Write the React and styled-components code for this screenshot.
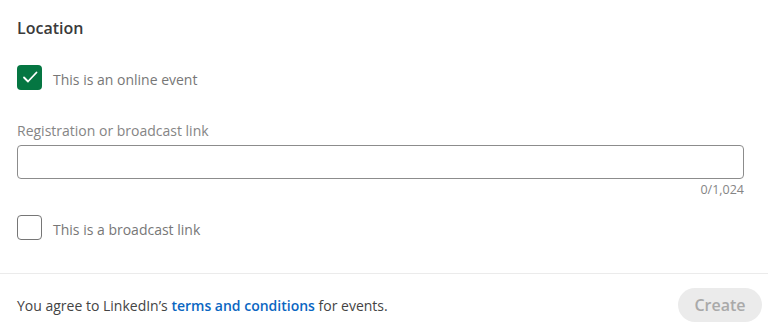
import React, { useState } from "react";
import styled, { createGlobalStyle } from "styled-components";

const Global = createGlobalStyle`
  html, body { margin: 0; padding: 0; background: #fff; }
  body { font-family: "Open Sans", "Noto Sans", sans-serif; }
  * { box-sizing: border-box; }
`;

const Page = styled.div`
  width: 768px;
  height: 330px;
  display: flex;
  flex-direction: column;
  background: #fff;
  overflow: hidden;
`;

const Body = styled.div`
  padding: 16px 24px 0 17px;
  display: flex;
  flex-direction: column;
`;

const Heading = styled.h2`
  margin: 0;
  font-size: 16px;
  line-height: 24px;
  font-weight: 600;
  color: #3a3a3a;
`;

const CheckRow = styled.label`
  display: flex;
  align-items: center;
  gap: 11px;
  margin-top: ${(p) => p.$top}px;
  cursor: pointer;
`;

const Box = styled.span`
  width: 25px;
  height: 25px;
  border-radius: 4px;
  flex: none;
  display: flex;
  align-items: center;
  justify-content: center;
  background: ${(p) => (p.$checked ? "#057642" : "#fff")};
  border: ${(p) => (p.$checked ? "none" : "1px solid #767676")};
`;

const CheckLabel = styled.span`
  font-size: 14px;
  color: #777;
  line-height: 20px;
  padding-top: 6px;
`;

const FieldLabel = styled.div`
  margin-top: 31px;
  font-size: 14px;
  line-height: 20px;
  color: #858585;
`;

const Input = styled.input`
  margin-top: 4px;
  width: 727px;
  height: 34px;
  border: 1px solid #8c8c8c;
  border-radius: 4px;
  font: inherit;
  font-size: 14px;
  padding: 0 8px;
  outline: none;
`;

const Counter = styled.div`
  width: 727px;
  text-align: right;
  font-size: 12.5px;
  line-height: 18px;
  margin-top: 2px;
  color: #858585;
`;

const Footer = styled.div`
  margin-top: auto;
  border-top: 1px solid #ebebeb;
  height: 57px;
  display: flex;
  align-items: center;
  justify-content: space-between;
  padding: 0 6px 0 17px;
`;

const Terms = styled.p`
  margin: 0;
  font-size: 14px;
  color: #444;
  padding-top: 6px;
`;

const Link = styled.a`
  color: #0a66c2;
  font-weight: 600;
  text-decoration: none;
`;

const Create = styled.button`
  width: 84px;
  height: 34px;
  border: none;
  border-radius: 17px;
  background: #ebebeb;
  color: #a9a9a9;
  font-family: inherit;
  font-size: 16px;
  font-weight: 600;
  margin-top: 5px;
`;

const Tick = () => (
  <svg width="18" height="18" viewBox="0 0 18 18" fill="none">
    <path d="M3 9.5l4 4L15.5 4.5" stroke="#fff" strokeWidth="1.8" strokeLinecap="round" strokeLinejoin="round" />
  </svg>
);

export default function App() {
  const [online, setOnline] = useState(true);
  const [broadcast, setBroadcast] = useState(false);
  const [link, setLink] = useState("");

  return (
    <Page>
      <Global />
      <Body>
        <Heading>Location</Heading>
        <CheckRow $top={24} onClick={() => setOnline(!online)}>
          <Box $checked={online}>{online && <Tick />}</Box>
          <CheckLabel>This is an online event</CheckLabel>
        </CheckRow>
        <FieldLabel>Registration or broadcast link</FieldLabel>
        <Input value={link} maxLength={1024} onChange={(e) => setLink(e.target.value)} />
        <Counter>{link.length}/1,024</Counter>
        <CheckRow $top={15} onClick={() => setBroadcast(!broadcast)}>
          <Box $checked={broadcast}>{broadcast && <Tick />}</Box>
          <CheckLabel>This is a broadcast link</CheckLabel>
        </CheckRow>
      </Body>
      <Footer>
        <Terms>
          You agree to LinkedIn’s <Link href="#">terms and conditions</Link> for events.
        </Terms>
        <Create disabled>Create</Create>
      </Footer>
    </Page>
  );
}
